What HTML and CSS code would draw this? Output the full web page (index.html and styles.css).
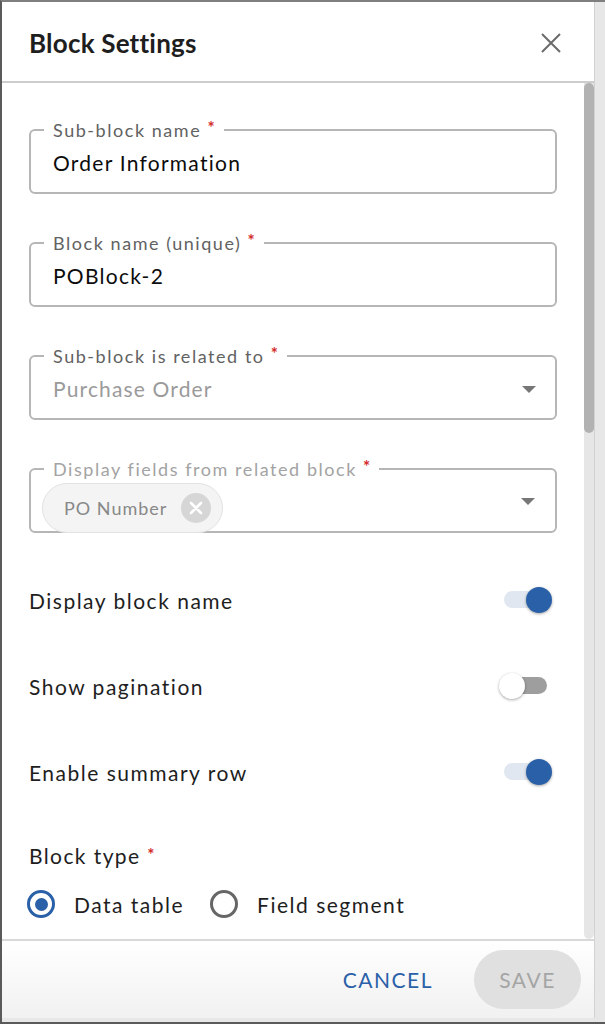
FILE: index.html
```html
<!DOCTYPE html>
<html lang="en">
<head>
<meta charset="utf-8">
<title>Block Settings</title>
<link rel="stylesheet" href="styles.css">
</head>
<body>
<div class="frame">
  <div class="dialog">
    <header class="dlg-header">
      <h1 class="dlg-title">Block Settings</h1>
      <button class="close-btn" aria-label="Close">
        <svg width="20" height="20" viewBox="0 0 20 20"><path d="M1 1 L19 19 M19 1 L1 19" stroke="#6b6b6b" stroke-width="2" fill="none"/></svg>
      </button>
    </header>
    <div class="dlg-body">
      <div class="dlg-content">
        <fieldset class="field">
          <legend class="field-label">Sub-block name <span class="req">*</span></legend>
          <div class="field-value">Order Information</div>
        </fieldset>
        <fieldset class="field">
          <legend class="field-label">Block name (unique) <span class="req">*</span></legend>
          <div class="field-value">POBlock-2</div>
        </fieldset>
        <fieldset class="field field-select">
          <legend class="field-label">Sub-block is related to <span class="req">*</span></legend>
          <div class="field-value field-value-muted">
            <span>Purchase Order</span>
            <span class="caret"></span>
          </div>
        </fieldset>
        <fieldset class="field field-chips">
          <legend class="field-label field-label-disabled">Display fields from related block <span class="req">*</span></legend>
          <div class="chip-row">
            <span class="chip">PO Number<span class="chip-x"><svg width="14" height="14" viewBox="0 0 14 14"><path d="M2 2 L12 12 M12 2 L2 12" stroke="#fff" stroke-width="2.6" stroke-linecap="round"/></svg></span></span>
            <span class="caret caret-top"></span>
          </div>
        </fieldset>

        <div class="toggle-row first">
          <span class="row-label">Display block name</span>
          <span class="switch on"><span class="track"></span><span class="knob"></span></span>
        </div>
        <div class="toggle-row">
          <span class="row-label">Show pagination</span>
          <span class="switch"><span class="track"></span><span class="knob"></span></span>
        </div>
        <div class="toggle-row">
          <span class="row-label">Enable summary row</span>
          <span class="switch on"><span class="track"></span><span class="knob"></span></span>
        </div>

        <div class="group-label">Block type <span class="req">*</span></div>
        <div class="radio-group">
          <label class="radio-opt"><span class="radio checked"></span>Data table</label>
          <label class="radio-opt"><span class="radio"></span>Field segment</label>
        </div>
      </div>
      <div class="scroll-track"><div class="scroll-thumb"></div></div>
    </div>
    <footer class="dlg-footer">
      <button class="btn-cancel">CANCEL</button>
      <button class="btn-save">SAVE</button>
    </footer>
  </div>
</div>
</body>
</html>
```

FILE: styles.css
```css
* { box-sizing: border-box; }
html, body { margin: 0; padding: 0; }
body {
  background: #e8e9e8;
  font-family: Lato, "Open Sans", "Liberation Sans", sans-serif;
  color: #222;
}
.frame {
  width: 605px;
  height: 1024px;
  border-top: 2px solid #7f7f7f;
  border-left: 2px solid #5a5a5a;
  border-bottom: 2px solid #5a5a5a;
  padding: 0 10px 4px 0;
  background: #e6e7e6;
}
.dialog {
  width: 593px;
  height: 1016px;
  background: #fff;
  border-right: 1px solid #d2d2d2;
  display: flex;
  flex-direction: column;
  overflow: hidden;
}
.dlg-header {
  height: 81px;
  flex: none;
  border-bottom: 2px solid #cdcdcd;
  display: flex;
  align-items: center;
  justify-content: space-between;
  padding: 2px 33px 0 27px;
}
.dlg-title {
  margin: 0;
  font-size: 26px;
  letter-spacing: 0.2px;
  font-weight: 700;
  color: #1e1e1e;
}
.close-btn {
  border: 0;
  background: none;
  padding: 0;
  width: 20px;
  height: 20px;
  display: flex;
}
.dlg-body {
  flex: 1;
  display: flex;
  min-height: 0;
}
.dlg-content {
  flex: 1;
  padding: 37px 27px 0 27px;
  overflow: hidden;
}
.scroll-track {
  width: 10px;
  flex: none;
  background: #e6e6e6;
  border-radius: 0 0 5px 5px;
}
.scroll-thumb {
  height: 350px;
  background: #b2b2b2;
  border-radius: 5px;
}

/* outlined fields */
.field {
  margin: 0 0 39px 0;
  padding: 11px 22px 17px 22px;
  border: 2px solid #b6b6b6;
  border-radius: 6px;
  min-width: 0;
}
.field-label {
  margin-left: -9px;
  padding: 0 9px;
  font-size: 18px;
  line-height: 20px;
  letter-spacing: 1.55px;
  color: #626262;
}
.field-label-disabled { color: #a3a3a3; }
.req {
  color: #d42a2a;
  font-size: 17px;
  font-weight: 700;
  line-height: 0;
  letter-spacing: 0;
  vertical-align: 3px;
}
.field-value {
  font-size: 21px;
  line-height: 24px;
  letter-spacing: 1.25px;
  color: #0c0c0c;
  display: flex;
  align-items: center;
  justify-content: space-between;
}
.field-value-muted { color: #9a9a9a; letter-spacing: 1.15px; }
.caret {
  width: 0;
  height: 0;
  border-left: 7px solid transparent;
  border-right: 7px solid transparent;
  border-top: 7px solid #777;
  margin-right: -3px;
}
.field-chips {
  padding: 4px 22px 0 22px;
  margin-bottom: 0;
}
.chip-row {
  display: flex;
  justify-content: space-between;
  align-items: flex-start;
  margin-bottom: -2px;
}
.caret-top { margin-top: 15px; margin-right: -2px; }
.chip {
  margin-left: -11px;
  height: 50px;
  display: inline-flex;
  align-items: center;
  padding: 0 11px 0 21px;
  border: 1px solid #e2e2e2;
  border-radius: 25px;
  background: #f4f4f4;
  font-size: 18px;
  letter-spacing: 1px;
  color: #888;
}
.chip-x {
  width: 30px;
  height: 30px;
  border-radius: 50%;
  background: #d6d6d6;
  display: flex;
  align-items: center;
  justify-content: center;
  margin-left: 14px;
}

/* toggle rows */
.toggle-row {
  height: 86px;
  display: flex;
  align-items: center;
  justify-content: space-between;
}
.toggle-row.first { margin-top: 24px; }
.row-label { font-size: 21px; letter-spacing: 1.5px; color: #1e1e1e; }
.switch {
  position: relative;
  width: 53px;
  height: 26px;
  margin-right: 5px;
}
.track {
  position: absolute;
  left: 5px;
  top: 4px;
  width: 43px;
  height: 17px;
  border-radius: 9px;
  background: #9e9e9e;
}
.knob {
  position: absolute;
  left: 0;
  top: 0;
  width: 26px;
  height: 26px;
  border-radius: 50%;
  background: #fff;
  box-shadow: 0 1px 3px rgba(0,0,0,0.35);
}
.switch.on .track { background: #e0e7f0; }
.switch.on .knob { left: 27px; background: #2a60a8; }

/* block type */
.group-label {
  margin-top: 29px;
  font-size: 21px;
  line-height: 24px;
  letter-spacing: 1.4px;
  color: #1e1e1e;
}
.radio-group {
  margin-top: 22px;
  display: flex;
  align-items: center;
  gap: 26px;
  margin-left: -2px;
}
.radio-opt {
  display: flex;
  align-items: center;
  gap: 19px;
  font-size: 21px;
  letter-spacing: 1.5px;
  color: #1e1e1e;
}
.radio {
  width: 28px;
  height: 28px;
  border-radius: 50%;
  border: 3px solid #666;
  display: flex;
  align-items: center;
  justify-content: center;
}
.radio.checked { border-color: #2a60a8; }
.radio.checked::after {
  content: "";
  width: 13px;
  height: 13px;
  border-radius: 50%;
  background: #2a60a8;
}

/* footer */
.dlg-footer {
  height: 79px;
  flex: none;
  border-top: 2px solid #d9d9d9;
  background: linear-gradient(#ffffff, #f1f1f1);
  display: flex;
  align-items: center;
  justify-content: flex-end;
  padding: 0 13px 0 0;
}
.btn-cancel, .btn-save {
  font-family: Lato, "Liberation Sans", sans-serif;
  font-size: 21px;
  letter-spacing: 1.5px;
  border: 0;
  background: none;
  padding: 0;
}
.btn-cancel {
  color: #2a60a8;
  margin-right: 41px;
}
.btn-save {
  width: 107px;
  height: 59px;
  border-radius: 30px;
  background: #e0e0e0;
  color: #a5a5a5;
}
```
